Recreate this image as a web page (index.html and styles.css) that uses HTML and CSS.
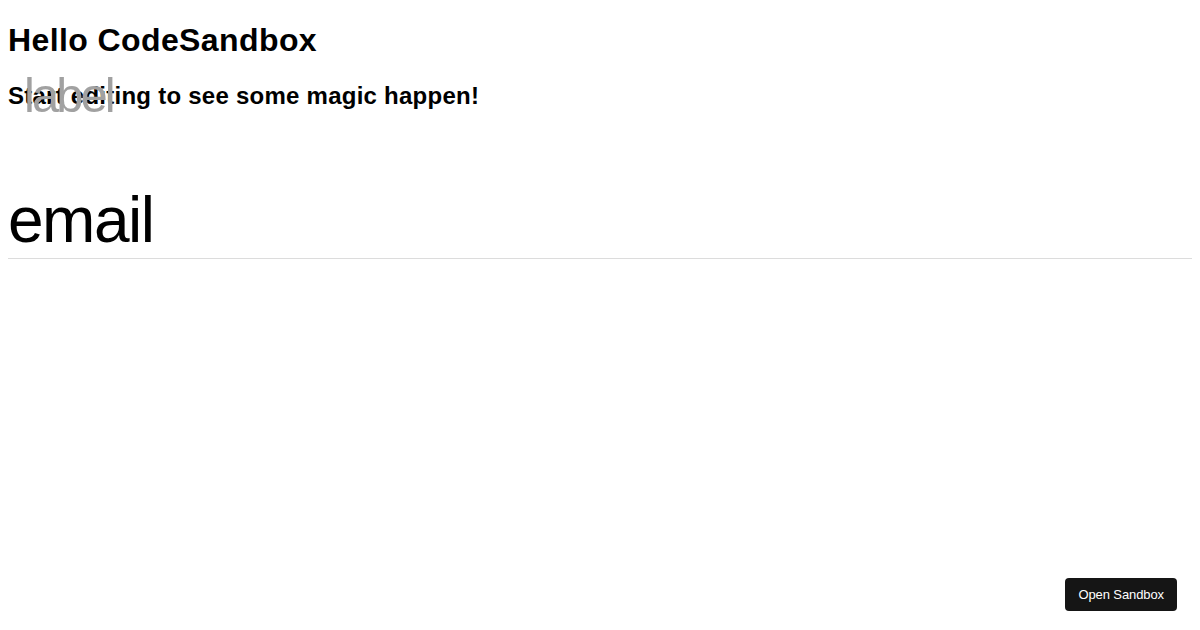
FILE: index.html
```html
<!DOCTYPE html>
<html lang="en">

<head>
    <meta charset="UTF-8">
    <meta name="viewport" content="width=device-width, initial-scale=1.0">
    <title>CodeSandbox</title>
    <link rel="stylesheet" href="styles.css">
</head>

<body>
    <div class="app">
        <h1>Hello CodeSandbox</h1>
        <h2>Start editing to see some magic happen!</h2>

        <div class="field">
            <label class="field-label" for="email">label</label>
            <input class="field-input" type="text" id="email" value="email">
        </div>
    </div>

    <a class="open-sandbox" href="#">Open Sandbox</a>
</body>

</html>
```

FILE: styles.css
```css
body {
    margin: 0;
    font-family: "Liberation Sans", Arial, sans-serif;
    color: #000;
    background: #fff;
}

.app {
    padding: 0 8px;
    overflow: hidden;
}

h1 {
    font-size: 32px;
    line-height: 37px;
    letter-spacing: 0.4px;
    margin: 22px 0 0;
}

h2 {
    font-size: 24px;
    line-height: 28px;
    letter-spacing: 0.25px;
    margin: 23px 0 0;
}

.field {
    position: relative;
    padding-top: 74px;
}

.field-label {
    position: absolute;
    left: 16px;
    top: -39px;
    font-size: 49px;
    line-height: 49px;
    letter-spacing: -3px;
    color: #a1a1a1;
}

.field-input {
    display: block;
    width: 100%;
    box-sizing: border-box;
    height: 75px;
    border: none;
    border-bottom: 1px solid #dcdcdc;
    padding: 0 0 2px;
    margin: 0;
    font-family: "Liberation Sans", Arial, sans-serif;
    font-size: 64px;
    line-height: 72px;
    letter-spacing: -1.5px;
    color: #000;
    outline: none;
    background: transparent;
}

.open-sandbox {
    position: fixed;
    right: 23px;
    bottom: 19px;
    padding: 0 13px;
    height: 33px;
    line-height: 33px;
    box-sizing: border-box;
    background: #151515;
    color: #fff;
    border-radius: 4px;
    font-size: 13px;
    letter-spacing: -0.1px;
    text-decoration: none;
}
```
